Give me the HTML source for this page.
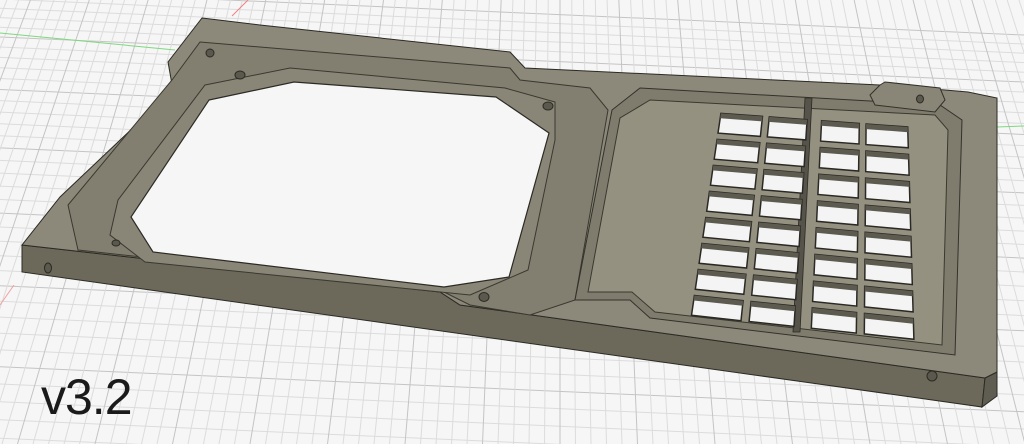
<!DOCTYPE html>
<html><head><meta charset="utf-8"><style>
html,body{margin:0;padding:0;background:#f6f6f6;width:1024px;height:444px;overflow:hidden}
#w{position:relative;width:1024px;height:444px;overflow:hidden;background:#f6f6f6}
svg{position:absolute;left:0;top:0}
.t{position:absolute;left:41px;top:372px;font:50px/1 "Liberation Sans",sans-serif;color:#1a1a1a;letter-spacing:-1px}
</style></head><body><div id="w">
<svg id="g" width="1024" height="444" viewBox="0 0 1024 444"></svg>
<svg width="1024" height="444" viewBox="0 0 1024 444">
<line x1="0" y1="33" x2="175" y2="50" stroke="#7fd87f" stroke-width="1"/>
<line x1="970" y1="128" x2="1024" y2="126" stroke="#7fd87f" stroke-width="1"/>
<line x1="248" y1="0" x2="232" y2="16" stroke="#f08080" stroke-width="1"/>
<line x1="14" y1="285" x2="0" y2="305" stroke="#f0a0a0" stroke-width="1"/>
<polygon points="22,245 440,292 460,305 640,330 985,378 982,407 22,272" fill="#6c695b" stroke="#2b2a24" stroke-width="1"/>
<polygon points="985,378 997,372 997,396 982,407" fill="#5f5d51" stroke="#2b2a24" stroke-width="1"/>
<polygon points="202,18 260,25 510,52 525,68 880,85 945,90 968,92 997,98 997,372 985,378 640,330 460,305 440,292 22,245 60,197 173,90 168,62" fill="#8d897a" stroke="#2b2a24" stroke-width="1"/>
<polygon points="200,42 510,68 520,80 590,88 608,110 575,300 530,315 470,305 440,290 78,250 68,205 172,80" fill="#827e70" stroke="#3a392f" stroke-width="1"/>
<polygon points="205,85 290,68 505,88 555,102 555,140 528,270 470,295 145,262 110,235 118,200" fill="#8a8677" stroke="#3a392f" stroke-width="1"/>
<polygon points="209,100 294,82 496,97 549,133 509,277 444,287 153,252 131,217" fill="#f6f6f6" stroke="#2b2a24" stroke-width="1.2"/>
<polygon points="640,88 940,105 962,120 955,355 650,318 630,300 575,300 612,110" fill="#7f7c6e" stroke="#33322a" stroke-width="1"/>
<polygon points="650,100 935,115 948,130 942,345 655,312 632,292 588,292 620,118" fill="#959181" stroke="#3a392f" stroke-width="1"/>
<polygon points="880,85 885,82 940,88 945,100 935,112 875,105 870,95" fill="#8a8677" stroke="#33322a" stroke-width="1"/>
<polygon points="805,98 812,98 800,332 793,332" fill="#55534a" stroke="#2b2a24" stroke-width="0.8"/>
<g id="cells"></g>
<g fill="#5b594e" stroke="#2b2a24" stroke-width="1">
<ellipse cx="48" cy="268" rx="3.5" ry="5"/>
<ellipse cx="932" cy="376" rx="5" ry="5"/>
<ellipse cx="548" cy="106" rx="5" ry="4"/>
<ellipse cx="240" cy="75" rx="5" ry="4"/>
<ellipse cx="210" cy="53" rx="4" ry="4"/>
<ellipse cx="484" cy="297" rx="5" ry="4.5"/>
<ellipse cx="116" cy="243" rx="4" ry="3"/>
<ellipse cx="920" cy="99" rx="3.5" ry="4"/>
</g>
</svg>
<div class="t">v3.2</div>
</div>
<script>
var ns="http://www.w3.org/2000/svg";
var g=document.getElementById("g");
function L(x1,y1,x2,y2,c,w){var l=document.createElementNS(ns,"line");l.setAttribute("x1",x1);l.setAttribute("y1",y1);l.setAttribute("x2",x2);l.setAttribute("y2",y2);l.setAttribute("stroke",c);l.setAttribute("stroke-width",w);g.appendChild(l);}
var y=-10,s=9,i=0;
while(y<444){var maj=(i%5==0);L(0,y,1024,y+45,maj?"#c4c4c4":"#dcdcdc",1);y+=s;s*=1.022;i++;}
var vx=560,vy=-1400;
for(var k=-60;k<=60;k++){var xb=vx+k*15.5;var maj=((k%5)+5)%5==0;L(vx+(xb-vx)*(1400/1844),0,xb,444,maj?"#c4c4c4":"#dcdcdc",1);}
var c=document.getElementById("cells");
var P=[[718,110],[911,124],[687,318],[918,343]];
function bl(u,v){var x=(1-u)*(1-v)*P[0][0]+u*(1-v)*P[1][0]+(1-u)*v*P[2][0]+u*v*P[3][0];
var yy=(1-u)*(1-v)*P[0][1]+u*(1-v)*P[1][1]+(1-u)*v*P[2][1]+u*v*P[3][1];return x.toFixed(1)+","+yy.toFixed(1);}
for(var r=0;r<8;r++)for(var q=0;q<4;q++){
var gu=0.035,gv=0.03;var u0=q/4+gu/2,u1=(q+1)/4-gu/2,v0=r/8+gv/2,v1=(r+1)/8-gv/2;
if(q==1)u1-=0.02; if(q==2)u0+=0.02;
var p=document.createElementNS(ns,"polygon");
p.setAttribute("points",bl(u0,v0)+" "+bl(u1,v0)+" "+bl(u1,v1)+" "+bl(u0,v1));
p.setAttribute("fill","#f4f4f4");p.setAttribute("stroke","#2a2924");p.setAttribute("stroke-width","1.5");c.appendChild(p);
var p2=document.createElementNS(ns,"polygon");
var vt=v0+(v1-v0)*0.25;
p2.setAttribute("points",bl(u0,v0)+" "+bl(u1,v0)+" "+bl(u1,vt)+" "+bl(u0,vt));
p2.setAttribute("fill","#5d5b50");c.appendChild(p2);}
</script>
</body></html>
